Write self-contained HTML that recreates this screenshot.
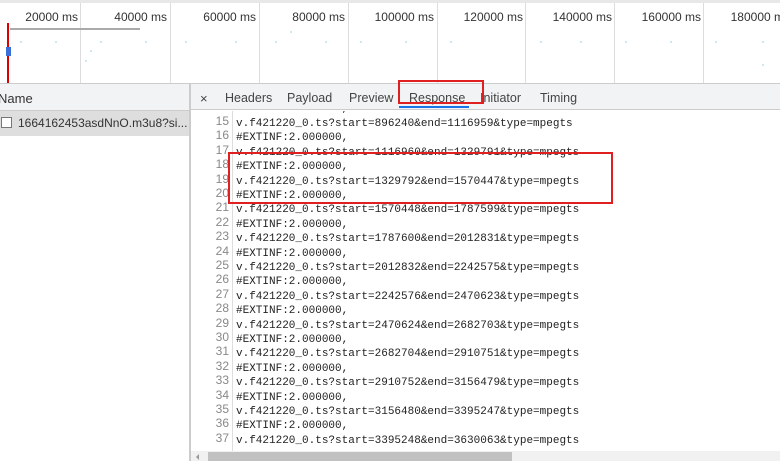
<!DOCTYPE html>
<html><head><style>
*{margin:0;padding:0;box-sizing:border-box}
body{width:780px;height:461px;overflow:hidden;background:#fff;font-family:"Liberation Sans",sans-serif;position:relative}
.abs{position:absolute}
.gl{position:absolute;top:3px;height:81px;width:1px;background:#ddd}
.lb{position:absolute;top:10px;font-size:12px;color:#333;text-align:right;width:85px}
.dot{position:absolute;width:2px;height:2px;background:#cfe8f0}
.line{position:absolute;left:0;height:14px;line-height:14px;font-family:"Liberation Mono",monospace;font-size:11px;color:#222;white-space:pre;width:589px}
.ln{position:absolute;left:0;top:-3px;width:38px;text-align:right;color:#888;font-family:"Liberation Sans",sans-serif;font-size:12px;line-height:14px}
.tx{position:absolute;left:45px;top:0}
.tab{position:absolute;top:91px;font-size:12.5px;color:#444}
</style></head><body>
<div class="abs" style="left:0;top:0;width:780px;height:3px;background:#e8e8e8"></div>
<div class="gl" style="left:80px"></div><div class="gl" style="left:170px"></div><div class="gl" style="left:259px"></div><div class="gl" style="left:348px"></div><div class="gl" style="left:437px"></div><div class="gl" style="left:525px"></div><div class="gl" style="left:614px"></div><div class="gl" style="left:703px"></div>
<div class="lb" style="left:-7px">20000 ms</div><div class="lb" style="left:82px">40000 ms</div><div class="lb" style="left:171px">60000 ms</div><div class="lb" style="left:260px">80000 ms</div><div class="lb" style="left:349px">100000 ms</div><div class="lb" style="left:438px">120000 ms</div><div class="lb" style="left:527px">140000 ms</div><div class="lb" style="left:616px">160000 ms</div><div class="lb" style="left:705px">180000 ms</div>
<div class="abs" style="left:10px;top:28px;width:130px;height:2px;background:#aaa"></div>
<div class="abs" style="left:7px;top:23px;width:2px;height:61px;background:#d00"></div>
<div class="abs" style="left:6px;top:47px;width:5px;height:9px;background:#3a6fd8"></div>
<div class="dot" style="left:20px;top:41px"></div><div class="dot" style="left:55px;top:41px"></div><div class="dot" style="left:90px;top:50px"></div><div class="dot" style="left:100px;top:41px"></div><div class="dot" style="left:145px;top:41px"></div><div class="dot" style="left:185px;top:41px"></div><div class="dot" style="left:235px;top:41px"></div><div class="dot" style="left:275px;top:41px"></div><div class="dot" style="left:290px;top:31px"></div><div class="dot" style="left:325px;top:41px"></div><div class="dot" style="left:360px;top:41px"></div><div class="dot" style="left:405px;top:41px"></div><div class="dot" style="left:450px;top:41px"></div><div class="dot" style="left:540px;top:41px"></div><div class="dot" style="left:580px;top:41px"></div><div class="dot" style="left:625px;top:41px"></div><div class="dot" style="left:670px;top:41px"></div><div class="dot" style="left:715px;top:41px"></div><div class="dot" style="left:762px;top:41px"></div><div class="dot" style="left:762px;top:64px"></div><div class="dot" style="left:85px;top:60px"></div>
<div class="abs" style="left:0;top:83px;width:780px;height:1px;background:#ccc"></div>
<div class="abs" style="left:0;top:84px;width:190px;height:27px;background:#f1f3f4;border-bottom:1px solid #ccc"></div>
<div class="abs" style="left:-2px;top:91px;font-size:13px;color:#333">Name</div>
<div class="abs" style="left:0;top:111px;width:190px;height:25px;background:#dedede"></div>
<div class="abs" style="left:1px;top:117px;width:11px;height:11px;border:1px solid #777;background:#fff"></div>
<div class="abs" style="left:18px;top:116px;font-size:12px;color:#333;width:170px;white-space:nowrap;overflow:hidden">1664162453asdNnO.m3u8?si...</div>
<div class="abs" style="left:189px;top:84px;width:2px;height:377px;background:#ccc"></div>
<div class="abs" style="left:191px;top:84px;width:589px;height:26px;background:#f1f3f4;border-bottom:1px solid #ccc"></div>
<div class="tab" style="left:200px;font-size:13px">×</div>
<div class="tab" style="left:225px">Headers</div><div class="tab" style="left:287px">Payload</div><div class="tab" style="left:349px">Preview</div><div class="tab" style="left:409px">Response</div><div class="tab" style="left:480px">Initiator</div><div class="tab" style="left:540px">Timing</div>
<div class="abs" style="left:399px;top:106px;width:70px;height:2px;background:#1a73e8"></div>
<div class="abs" style="left:191px;top:111px;width:589px;height:340px;overflow:hidden">
<div class="abs" style="left:41px;top:0;width:1px;height:340px;background:#ddd"></div>
<div class="line" style="top:-9px"><span class="ln">14</span><span class="tx">#EXTINF:2.000000,</span></div>
<div class="line" style="top:5.5px"><span class="ln">15</span><span class="tx">v.f421220_0.ts?start=896240&amp;end=1116959&amp;type=mpegts</span></div>
<div class="line" style="top:20px"><span class="ln">16</span><span class="tx">#EXTINF:2.000000,</span></div>
<div class="line" style="top:34.5px"><span class="ln">17</span><span class="tx">v.f421220_0.ts?start=1116960&amp;end=1329791&amp;type=mpegts</span></div>
<div class="line" style="top:49px"><span class="ln">18</span><span class="tx">#EXTINF:2.000000,</span></div>
<div class="line" style="top:63.5px"><span class="ln">19</span><span class="tx">v.f421220_0.ts?start=1329792&amp;end=1570447&amp;type=mpegts</span></div>
<div class="line" style="top:78px"><span class="ln">20</span><span class="tx">#EXTINF:2.000000,</span></div>
<div class="line" style="top:92px"><span class="ln">21</span><span class="tx">v.f421220_0.ts?start=1570448&amp;end=1787599&amp;type=mpegts</span></div>
<div class="line" style="top:106.5px"><span class="ln">22</span><span class="tx">#EXTINF:2.000000,</span></div>
<div class="line" style="top:121px"><span class="ln">23</span><span class="tx">v.f421220_0.ts?start=1787600&amp;end=2012831&amp;type=mpegts</span></div>
<div class="line" style="top:135.5px"><span class="ln">24</span><span class="tx">#EXTINF:2.000000,</span></div>
<div class="line" style="top:150px"><span class="ln">25</span><span class="tx">v.f421220_0.ts?start=2012832&amp;end=2242575&amp;type=mpegts</span></div>
<div class="line" style="top:164px"><span class="ln">26</span><span class="tx">#EXTINF:2.000000,</span></div>
<div class="line" style="top:178.5px"><span class="ln">27</span><span class="tx">v.f421220_0.ts?start=2242576&amp;end=2470623&amp;type=mpegts</span></div>
<div class="line" style="top:193px"><span class="ln">28</span><span class="tx">#EXTINF:2.000000,</span></div>
<div class="line" style="top:207.5px"><span class="ln">29</span><span class="tx">v.f421220_0.ts?start=2470624&amp;end=2682703&amp;type=mpegts</span></div>
<div class="line" style="top:222px"><span class="ln">30</span><span class="tx">#EXTINF:2.000000,</span></div>
<div class="line" style="top:236px"><span class="ln">31</span><span class="tx">v.f421220_0.ts?start=2682704&amp;end=2910751&amp;type=mpegts</span></div>
<div class="line" style="top:250.5px"><span class="ln">32</span><span class="tx">#EXTINF:2.000000,</span></div>
<div class="line" style="top:265px"><span class="ln">33</span><span class="tx">v.f421220_0.ts?start=2910752&amp;end=3156479&amp;type=mpegts</span></div>
<div class="line" style="top:279.5px"><span class="ln">34</span><span class="tx">#EXTINF:2.000000,</span></div>
<div class="line" style="top:294px"><span class="ln">35</span><span class="tx">v.f421220_0.ts?start=3156480&amp;end=3395247&amp;type=mpegts</span></div>
<div class="line" style="top:308px"><span class="ln">36</span><span class="tx">#EXTINF:2.000000,</span></div>
<div class="line" style="top:322.5px"><span class="ln">37</span><span class="tx">v.f421220_0.ts?start=3395248&amp;end=3630063&amp;type=mpegts</span></div>
</div>
<div class="abs" style="left:191px;top:451px;width:589px;height:10px;background:#f1f1f1"></div>
<div class="abs" style="left:208px;top:452px;width:304px;height:9px;background:#c1c1c1"></div>
<div class="abs" style="left:196px;top:454px;width:0;height:0;border-top:3px solid transparent;border-bottom:3px solid transparent;border-right:3px solid #999"></div>
<div class="abs" style="left:398px;top:80px;width:86px;height:24px;border:2px solid #e02020"></div>
<div class="abs" style="left:228px;top:152px;width:385px;height:52px;border:2px solid #e02020"></div>
</body></html>
